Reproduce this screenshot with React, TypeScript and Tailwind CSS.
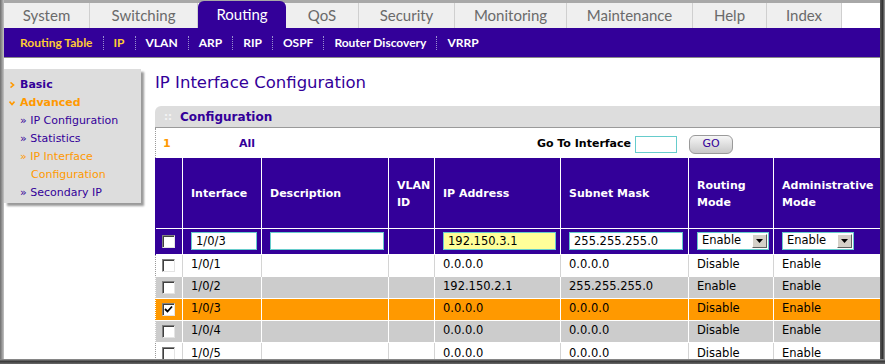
import React from 'react'

const tabs = [
  { label: 'System', w: 'w-[86px]' },
  { label: 'Switching', w: 'w-[108px]' },
  { label: 'Routing', w: 'w-[88px]', active: true },
  { label: 'QoS', w: 'w-[73px]' },
  { label: 'Security', w: 'w-[96px]' },
  { label: 'Monitoring', w: 'w-[112px]' },
  { label: 'Maintenance', w: 'w-[126px]' },
  { label: 'Help', w: 'w-[74px]' },
  { label: 'Index', w: 'w-[75px]' },
]

const subnav = [
  { label: 'Routing Table', on: true },
  { label: 'IP', on: true },
  { label: 'VLAN' },
  { label: 'ARP' },
  { label: 'RIP' },
  { label: 'OSPF' },
  { label: 'Router Discovery' },
  { label: 'VRRP' },
]

const rows = [
  { iface: '1/0/1', ip: '0.0.0.0', mask: '0.0.0.0', rm: 'Disable', am: 'Enable', bg: 'bg-white', line: 'border-[#d4d4d4]', first: 'border-l-[#999999]', checked: false },
  { iface: '1/0/2', ip: '192.150.2.1', mask: '255.255.255.0', rm: 'Enable', am: 'Enable', bg: 'bg-[#cccccc]', line: 'border-white', first: 'border-l-[#cccccc]', checked: false },
  { iface: '1/0/3', ip: '0.0.0.0', mask: '0.0.0.0', rm: 'Disable', am: 'Enable', bg: 'bg-[#ff9900]', line: 'border-white', first: 'border-l-[#ff9900]', checked: true },
  { iface: '1/0/4', ip: '0.0.0.0', mask: '0.0.0.0', rm: 'Disable', am: 'Enable', bg: 'bg-[#cccccc]', line: 'border-white', first: 'border-l-[#cccccc]', checked: false },
  { iface: '1/0/5', ip: '0.0.0.0', mask: '0.0.0.0', rm: 'Disable', am: 'Enable', bg: 'bg-white', line: 'border-[#d4d4d4]', first: 'border-l-[#999999]', checked: false },
]

function Checkbox({ checked }: { checked?: boolean }) {
  return (
    <div className="w-[13px] h-[13px] bg-white border border-t-[#808080] border-l-[#808080] border-r-[#e4e4e4] border-b-[#e4e4e4] shadow-[inset_1px_1px_0_#404040] flex items-center justify-center">
      {checked && (
        <svg width="9" height="9" viewBox="0 0 9 9">
          <path d="M1 4 L3.5 6.5 L8 1.5" stroke="#000" strokeWidth="1.8" fill="none" />
        </svg>
      )}
    </div>
  )
}

function Select({ value }: { value: string }) {
  return (
    <div className="w-[72px] h-[18px] bg-white border border-[#66cccc] flex items-center justify-between pl-[4px] pr-[1px]">
      <span className="text-[11.5px] text-black">{value}</span>
      <div className="w-[15px] h-[14px] bg-[#d4d0c8] border border-t-white border-l-white border-r-[#606060] border-b-[#606060] flex items-center justify-center">
        <svg width="7" height="4" viewBox="0 0 7 4">
          <path d="M0 0 H7 L3.5 4 Z" fill="#000" />
        </svg>
      </div>
    </div>
  )
}

function Chevron({ down }: { down?: boolean }) {
  return (
    <svg width="6" height="6" viewBox="0 0 6 6" className="mr-[5px]">
      {down ? (
        <path d="M0.5 1.5 L3 4.5 L5.5 1.5" stroke="#ff9900" strokeWidth="1.6" fill="none" />
      ) : (
        <path d="M1.5 0.5 L4.5 3 L1.5 5.5" stroke="#ff9900" strokeWidth="1.6" fill="none" />
      )}
    </svg>
  )
}

export default function App() {
  return (
    <div className="w-[885px] h-[364px] overflow-hidden flex flex-col bg-white font-['DejaVu_Sans',Verdana,sans-serif]">
      <div className="flex flex-1 min-h-0">
        {/* left frame */}
        <div className="w-[4px] bg-gradient-to-r from-[#6e6e6e] to-[#c4c4c4]" />

        <div className="flex-1 flex flex-col min-w-0">
          {/* Tabs */}
          <div className="h-[28px] flex border-t-[3px] border-[#a8a8a8] bg-white font-['Lato',sans-serif]">
            {tabs.map(t =>
              t.active ? (
                <div key={t.label} className={`${t.w} -mt-[2px] h-[27px] rounded-t-[6px] bg-[#330099] flex items-center justify-center text-[15px] text-white`}>
                  {t.label}
                </div>
              ) : (
                <div key={t.label} className={`${t.w} h-full bg-[#efefef] border-r border-[#cfcfcf] flex items-center justify-center text-[15px] text-[#6a6a6a]`}>
                  {t.label}
                </div>
              )
            )}
          </div>

          {/* Sub nav */}
          <div className="h-[30px] bg-[#330099] flex items-center pl-[16px] font-['Lato',sans-serif] text-[12px] font-bold border-b border-[#8a8a8a]">
            {subnav.map((s, i) => (
              <React.Fragment key={s.label}>
                <span className={s.on ? 'text-[#ffcc33]' : 'text-white'}>{s.label}</span>
                {i < subnav.length - 1 && (
                  <span className="mx-[10px] h-[14px] border-l border-dotted border-[#9a8fd0]" />
                )}
              </React.Fragment>
            ))}
          </div>

          {/* Body */}
          <div className="flex flex-1 min-h-0 items-start">
            {/* Sidebar */}
            <div className="mt-[11px] w-[137px] h-[134px] bg-[#dddddd] shadow-[3px_3px_2px_#9a9a9a] pt-[7px] pl-[5px] text-[11px] leading-[18px]">
              <div className="flex items-center font-bold text-[#330099]">
                <Chevron />
                <span>Basic</span>
              </div>
              <div className="flex items-center font-bold text-[#ff9900]">
                <Chevron down />
                <span>Advanced</span>
              </div>
              <div className="pl-[11px] text-[#330099]">» IP Configuration</div>
              <div className="pl-[11px] text-[#330099]">» Statistics</div>
              <div className="pl-[11px] text-[#ff9900]">» IP Interface</div>
              <div className="pl-[22px] text-[#ff9900]">Configuration</div>
              <div className="pl-[11px] text-[#330099]">» Secondary IP</div>
            </div>

            {/* Main */}
            <div className="ml-[14px] flex-1 min-w-0 pt-[15px]">
              <h1 className="text-[16.5px] leading-[20px] text-[#330099]">IP Interface Configuration</h1>

              <div className="mt-[13px] h-[22px] bg-[#dddddd] rounded-tl-[6px] border-b border-[#9a9a9a] flex items-center pl-[9px] text-[12px] font-bold">
                <span className="text-[#f4f4f4] text-[10px]">::</span>
                <span className="ml-[8px] text-[#330099]">Configuration</span>
              </div>

              <div className="h-[30px] pt-[3px] flex items-center pl-[7px] pr-[147px] text-[11px] font-bold border-l border-dotted border-[#999999]">
                <span className="w-[76px] text-[#ff9900]">1</span>
                <span className="text-[#330099]">All</span>
                <span className="flex-1" />
                <span className="text-black">Go To Interface</span>
                <input className="ml-[4px] w-[42px] h-[17px] border border-[#66cccc] bg-white" />
                <button className="ml-[12px] w-[44px] h-[19px] rounded-[6px] border border-[#9a9a9a] bg-gradient-to-b from-[#f6f6f6] to-[#c8c8c8] text-[11px] font-normal text-[#330099]">
                  GO
                </button>
              </div>

              <table className="table-fixed border-collapse w-[725px] text-[11.5px]">
                <colgroup>
                  <col className="w-[27px]" />
                  <col className="w-[79px]" />
                  <col className="w-[127px]" />
                  <col className="w-[46px]" />
                  <col className="w-[126px]" />
                  <col className="w-[128px]" />
                  <col className="w-[85px]" />
                  <col className="w-[107px]" />
                </colgroup>
                <thead>
                  <tr className="h-[70px] bg-[#330099] text-white font-bold leading-[17px] text-[11px]">
                    <th className="border-l border-[#330099]" />
                    {['Interface', 'Description', 'VLAN ID', 'IP Address', 'Subnet Mask', 'Routing Mode', 'Administrative Mode'].map(h => (
                      <th key={h} className="border-l border-white px-[8px] pt-[2px] text-left align-middle font-bold">
                        {h}
                      </th>
                    ))}
                  </tr>
                </thead>
                <tbody>
                  <tr className="h-[26px] bg-[#330099] border-t border-white">
                    <td className="pl-[6px] border-l border-[#330099]">
                      <Checkbox />
                    </td>
                    <td className="border-l border-white pl-[8px]">
                      <input readOnly value="1/0/3" className="w-[66px] h-[18px] border border-[#66cccc] bg-white px-[4px] text-[11.5px] text-black" />
                    </td>
                    <td className="border-l border-white pl-[8px]">
                      <input readOnly value="" className="w-[114px] h-[18px] border border-[#66cccc] bg-white px-[4px] text-[11.5px]" />
                    </td>
                    <td className="border-l border-white" />
                    <td className="border-l border-white pl-[8px]">
                      <input readOnly value="192.150.3.1" className="w-[113px] h-[18px] border border-[#66cccc] bg-[#ffff99] px-[4px] text-[11.5px] text-black" />
                    </td>
                    <td className="border-l border-white pl-[8px]">
                      <input readOnly value="255.255.255.0" className="w-[114px] h-[18px] border border-[#66cccc] bg-white px-[4px] text-[11.5px] text-black" />
                    </td>
                    <td className="border-l border-white pl-[8px]">
                      <Select value="Enable" />
                    </td>
                    <td className="border-l border-white pl-[8px]">
                      <Select value="Enable" />
                    </td>
                  </tr>
                  {rows.map(r => (
                    <tr key={r.iface + r.bg} className={`h-[22px] ${r.bg} border-t border-white text-black`}>
                      <td className={`pl-[6px] border-l border-dotted ${r.first}`}>
                        <Checkbox checked={r.checked} />
                      </td>
                      <td className={`border-l ${r.line} px-[8px]`}>{r.iface}</td>
                      <td className={`border-l ${r.line}`} />
                      <td className={`border-l ${r.line}`} />
                      <td className={`border-l ${r.line} px-[8px]`}>{r.ip}</td>
                      <td className={`border-l ${r.line} px-[8px]`}>{r.mask}</td>
                      <td className={`border-l ${r.line} px-[8px]`}>{r.rm}</td>
                      <td className={`border-l ${r.line} px-[8px]`}>{r.am}</td>
                    </tr>
                  ))}
                </tbody>
              </table>
            </div>
          </div>
        </div>

        {/* right frame */}
        <div className="w-[5px] bg-gradient-to-r from-[#5a5a5a] via-[#333333] to-[#a0a0a0]" />
      </div>
      {/* bottom frame */}
      <div className="h-[5px] bg-gradient-to-b from-[#9a9a9a] via-[#3c3c3c] to-[#6a6a6a]" />
    </div>
  )
}
